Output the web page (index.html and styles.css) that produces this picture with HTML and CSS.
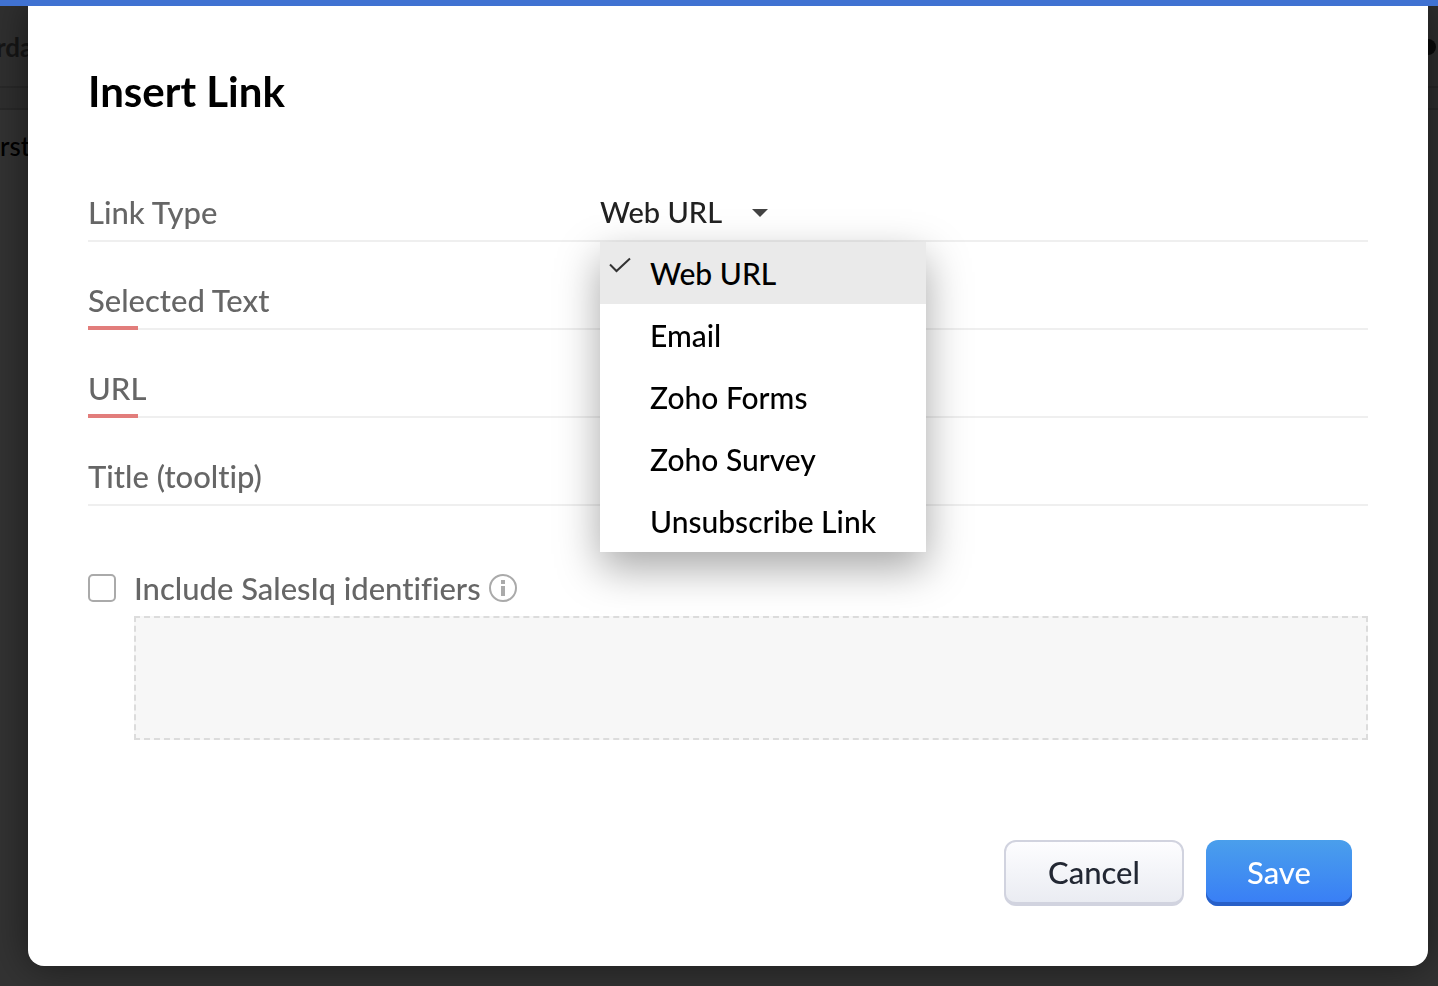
FILE: index.html
```
<!DOCTYPE html>
<html lang="en">
<head>
    <meta charset="UTF-8">
    <meta name="viewport" content="width=device-width, initial-scale=1.0">
    <title>Insert Link</title>
    <link rel="stylesheet" href="styles.css">
</head>
<body>
    <!-- Dimmed page behind the dialog -->
    <div class="page" aria-hidden="true">
        <div class="page-header">
            <span>rda</span>
            <svg width="20" height="20" viewBox="0 0 20 20"><circle cx="10" cy="10" r="8" fill="#0a0a0a"/></svg>
        </div>
        <div class="page-strip"></div>
        <div class="page-body">rst</div>
    </div>
    <div class="top-bar"></div>

    <form class="modal" role="dialog" aria-labelledby="modal-title">
        <h1 id="modal-title">Insert Link</h1>

        <div class="row">
            <label for="link-type">Link Type</label>
            <div class="field">
                <select id="link-type">
                    <option>Web URL</option>
                    <option>Email</option>
                    <option>Zoho Forms</option>
                    <option>Zoho Survey</option>
                    <option>Unsubscribe Link</option>
                </select>
                <svg class="caret" width="16" height="10" viewBox="0 0 16 10"><path d="M0 2h16L8 10z" fill="#444"/></svg>
                <div class="menu" role="listbox" aria-label="Link Type">
                    <button type="button" class="option selected" role="option" aria-selected="true">
                        <svg class="check" width="22" height="16" viewBox="0 0 22 16"><path d="M1 7.500L7.500 14L21 1.500" fill="none" stroke="#333" stroke-width="2"/></svg>
                        Web URL
                    </button>
                    <button type="button" class="option" role="option">Email</button>
                    <button type="button" class="option" role="option">Zoho Forms</button>
                    <button type="button" class="option" role="option">Zoho Survey</button>
                    <button type="button" class="option" role="option">Unsubscribe Link</button>
                </div>
            </div>
        </div>
        <div class="row required">
            <label for="selected-text">Selected Text</label>
            <input type="text" id="selected-text" required>
        </div>
        <div class="row required">
            <label for="url">URL</label>
            <input type="text" id="url" placeholder="http://www.yoursite.com" required>
        </div>
        <div class="row">
            <label for="link-title">Title (tooltip)</label>
            <input type="text" id="link-title">
        </div>

        <div class="identifiers">
            <input type="checkbox" id="salesiq">
            <label for="salesiq">Include SalesIq identifiers</label>
            <svg width="28" height="28" viewBox="0 0 28 28">
                <circle cx="14" cy="14" r="13" fill="none" stroke="#aaa" stroke-width="2"/>
                <path d="M12 6h4v4h-4zM12 12h4v10h-4z" fill="#aaa"/>
            </svg>
        </div>
        <div class="identifiers-box"></div>

        <div class="actions">
            <button type="button" class="btn cancel">Cancel</button>
            <button type="submit" class="btn save">Save</button>
        </div>
    </form>
</body>
</html>
```
FILE: styles.css
```
* {
    box-sizing: border-box;
}
body {
    margin: 0;
    font-family: Lato, "Liberation Sans", sans-serif;
    font-size: 31px;
    font-weight: 500;
    line-height: 36px;
    font-variant-ligatures: none;
    background: #333;
}
input, select, button {
    font: inherit;
    color: inherit;
}

/* page behind */
.page {
    position: fixed;
    inset: 0;
    overflow: hidden;
    font-size: 26px;
    background: #333;
}
.page-header {
    display: flex;
    justify-content: space-between;
    align-items: center;
    height: 88px;
    margin-left: -4px;
    padding-top: 8px;
    font-weight: bold;
    color: #161616;
    background: #303030;
    border-bottom: 2px solid #292929;
}
.page-strip {
    height: 22px;
    background: #2f2f2f;
    border-bottom: 2px solid #292929;
}
.page-body {
    padding-top: 18px;
    color: #000;
}
.top-bar {
    position: fixed;
    top: 0;
    left: 0;
    right: 0;
    z-index: 2;
    height: 6px;
    background: #4072d2;
}

/* dialog */
.modal {
    position: relative;
    margin: 0 10px 20px 28px;
    padding: 67px 60px 60px;
    background: #fff;
    border-radius: 0 0 16px 16px;
    box-shadow: 0 0 40px rgba(0, 0, 0, 0.5);
}
h1 {
    margin: 0 0 39px;
    font-size: 42px;
    line-height: 48px;
    font-weight: bold;
    color: #000;
}
.row {
    display: grid;
    grid-template-columns: 2fr 3fr;
    position: relative;
    padding: 40px 0 10px;
    color: #222;
    border-bottom: 2px solid #efefef;
}
.row label,
.identifiers label {
    color: #666;
}
.required::after {
    content: "";
    position: absolute;
    left: 0;
    bottom: -2px;
    width: 50px;
    height: 4px;
    background: #e27d7b;
}
.row input {
    width: 100%;
    height: 36px;
    padding: 0;
    border: none;
    outline: none;
    background: none;
    font-size: 30px;
    font-weight: 400;
}
.row input::placeholder {
    color: #aaa;
}
.field {
    display: flex;
    align-items: center;
    position: relative;
}
select {
    width: 168px;
    height: 36px;
    padding: 0;
    border: none;
    outline: none;
    appearance: none;
    background: none;
    font-size: 29px;
}
.caret {
    margin-left: -16px;
    pointer-events: none;
}
.menu {
    position: absolute;
    top: 48px;
    left: 0;
    z-index: 1;
    width: 326px;
    background: #fff;
    box-shadow: 0 16px 40px rgba(0, 0, 0, 0.35);
}
.option {
    display: block;
    position: relative;
    width: 100%;
    height: 62px;
    padding: 0 0 0 50px;
    border: none;
    font-size: 30px;
    text-align: left;
    color: #000;
    background: none;
}
.option.selected {
    background: #eaeaea;
}
.check {
    position: absolute;
    top: 15px;
    left: 9px;
}

.identifiers {
    display: flex;
    align-items: center;
    margin-top: 64px;
}
.identifiers input {
    width: 28px;
    height: 28px;
    margin: 0 18px 0 0;
    appearance: none;
    border: 2px solid #aaa;
    border-radius: 5px;
}
.identifiers label {
    margin-right: 8px;
}
.identifiers-box {
    height: 124px;
    margin: 10px 0 0 46px;
    background: #f7f7f7;
    border: 2px dashed #dcdcdc;
}

.actions {
    display: flex;
    justify-content: flex-end;
    gap: 22px;
    margin-top: 100px;
    padding-right: 16px;
}
.btn {
    height: 66px;
    padding: 0 38px 2px;
    border: none;
    border-radius: 12px;
    cursor: pointer;
}
.cancel {
    min-width: 180px;
    padding-bottom: 0;
    color: #222733;
    background: linear-gradient(#fdfdff, #eaecf2);
    border: 2px solid #d1d3df;
    border-bottom-width: 4px;
}
.save {
    min-width: 146px;
    color: #fff;
    background: linear-gradient(#4a9fec, #387df6);
    box-shadow: inset 0 -4px #2860c8;
}
```
